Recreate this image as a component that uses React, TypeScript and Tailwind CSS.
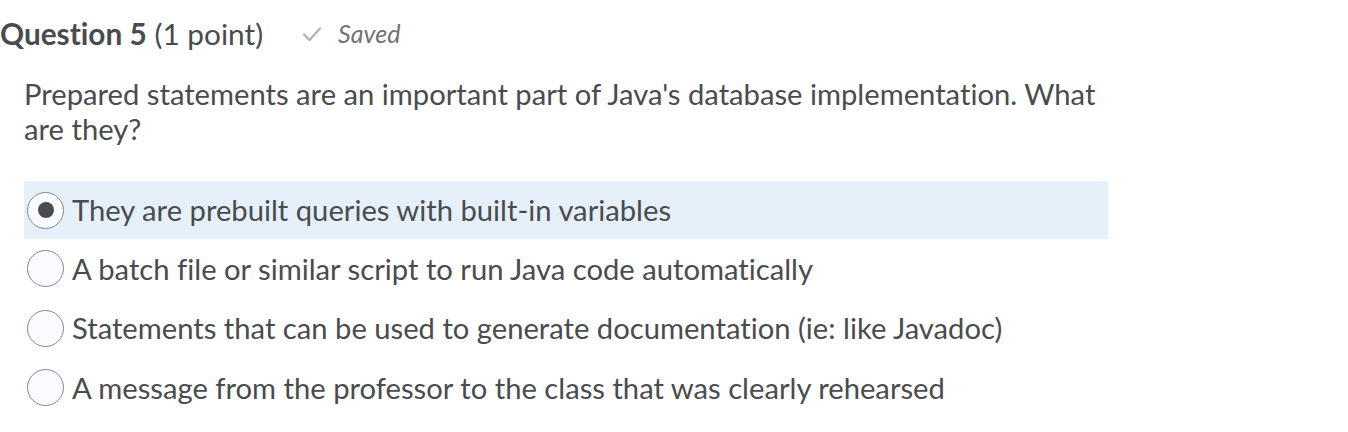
import React, { useState } from 'react';

const options = [
  'They are prebuilt queries with built-in variables',
  'A batch file or similar script to run Java code automatically',
  'Statements that can be used to generate documentation (ie: like Javadoc)',
  'A message from the professor to the class that was clearly rehearsed',
];

export default function App() {
  const [selected, setSelected] = useState(0);

  return (
    <div
      className="w-[1348px] h-[432px] bg-white text-[#494c4e] [font-variant-ligatures:none]"
      style={{ fontFamily: 'Lato, "Open Sans", sans-serif' }}
    >
      {/* Header */}
      <div className="flex items-center h-[68px]">
        <h2 className="text-[29.8px] leading-none">
          <span className="font-bold">Question 5</span> <span>(1 point)</span>
        </h2>
        <div className="flex items-center ml-[38px] text-[#6e7376]">
          <svg width="22" height="22" viewBox="0 0 22 22" className="mr-[15px]">
            <path d="M3 11.5 L8.5 17 L19 5.5" fill="none" stroke="#b1b5b8" strokeWidth="2.4" strokeLinecap="round" strokeLinejoin="round" />
          </svg>
          <span className="italic text-[25px]">Saved</span>
        </div>
      </div>

      {/* Question */}
      <div className="pl-[24px] pt-[8px]">
        <p className="text-[29.2px] leading-[35px] w-[1090px]">
          Prepared statements are an important part of Java's database implementation. What are they?
        </p>

        <div className="mt-[35px] w-[1084px] flex flex-col">
          {options.map((opt, i) => (
            <label
              key={i}
              onClick={() => setSelected(i)}
              className={`flex items-center cursor-pointer ${selected === i ? 'bg-[#e6f0fb] h-[58px]' : 'h-[59.5px]'}`}
            >
              <span className="w-[37px] h-[37px] ml-[3px] rounded-full border border-[#86898b] bg-[#f9fbff] flex items-center justify-center shrink-0">
                {selected === i && <span className="w-[16px] h-[16px] rounded-full bg-[#494c4e]" />}
              </span>
              <span className="ml-[8px] text-[29.2px]">{opt}</span>
            </label>
          ))}
        </div>
      </div>
    </div>
  );
}
